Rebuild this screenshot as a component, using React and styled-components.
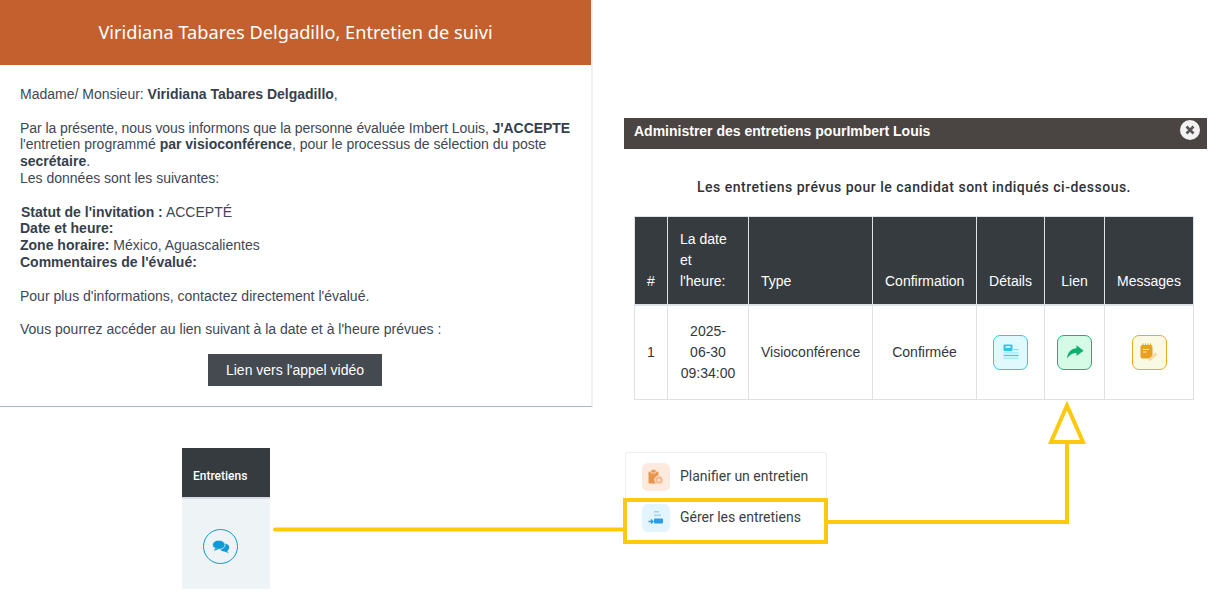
import React from 'react'
import styled, { createGlobalStyle } from 'styled-components'

const GlobalStyle = createGlobalStyle`
  html, body {
    margin: 0;
    padding: 0;
    background: #fff;
    font-family: "Liberation Sans", Arial, sans-serif;
  }
`

const Canvas = styled.div`
  position: relative;
  width: 1209px;
  height: 598px;
  overflow: hidden;
  background: #fff;
`

const TopRow = styled.div`
  display: flex;
  align-items: flex-start;
  height: 407px;
`

const BottomRow = styled.div`
  display: flex;
  align-items: flex-start;
  padding: 41px 0 0 182px;
`

/* email preview */
const Email = styled.section`
  box-sizing: border-box;
  width: 593px;
  height: 407px;
  flex: none;
  border-right: 2px solid #f0f0f0;
  border-bottom: 1px solid #a9bccd;
`

const EmailHeader = styled.h1`
  margin: 0;
  height: 65px;
  background: #c4602e;
  color: #fff;
  font-family: "Noto Sans", sans-serif;
  font-size: 18.2px;
  font-weight: 400;
  line-height: 65px;
  text-align: center;
`

const EmailBody = styled.div`
  padding: 21.1px 0 0 20px;
  color: #3d4757;
  font-size: 14px;
  line-height: 16.8px;
  white-space: nowrap;
  b {
    color: #363f4d;
  }
`

const Para = styled.p`
  margin: 0 0 16.8px;
`

const TightLine = styled.span`
  letter-spacing: -0.07px;
`

const Status = styled.b`
  margin-left: 1px;
`

const VideoLink = styled.a`
  display: block;
  width: 174px;
  height: 32px;
  margin: -1.1px 0 0 188px;
  background: #454950;
  color: #fff;
  font-size: 14px;
  line-height: 32px;
  text-align: center;
`

/* modal */
const Modal = styled.section`
  width: 583px;
  flex: none;
  margin: 118px 0 0 31px;
`

const ModalHeader = styled.header`
  display: flex;
  align-items: center;
  justify-content: space-between;
  height: 31px;
  padding: 0 7px 5px 10px;
  box-sizing: border-box;
  background: #4a4443;
  color: #fff;
  font-size: 14px;
  font-weight: 700;
`

const CloseBtn = styled.span`
  display: flex;
  align-items: center;
  justify-content: center;
  width: 20px;
  height: 20px;
  margin-bottom: 2px;
  border-radius: 50%;
  background: #f2f2f2;
`

const Intro = styled.p`
  margin: 31px 0 21px;
  padding-right: 3px;
  color: #2f3338;
  font-family: Roboto, sans-serif;
  font-size: 14px;
  font-weight: 500;
  line-height: 15px;
  text-align: center;
  letter-spacing: 0.5px;
`

const Table = styled.table`
  width: 559px;
  margin-left: 10px;
  border-collapse: collapse;
  table-layout: fixed;
  font-size: 14px;
  line-height: 21px;
  color: #32373c;
`

const Head = styled.th`
  padding: 12px;
  background: #363b40;
  color: #fff;
  font-weight: 400;
  text-align: ${(p) => p.$align || 'center'};
  vertical-align: bottom;
  border: 1px solid #dee2e6;
  border-bottom-width: 2px;
`

const Cell = styled.td`
  padding: 12px;
  height: 94px;
  box-sizing: border-box;
  text-align: ${(p) => p.$align || 'center'};
  vertical-align: middle;
  border: 1px solid #dee2e6;
`

const ActionBtn = styled.span`
  display: inline-flex;
  align-items: center;
  justify-content: center;
  box-sizing: border-box;
  width: 35px;
  height: 35px;
  vertical-align: middle;
  border-radius: 7px;
  border: 1px solid ${(p) => p.$border};
  background: ${(p) => p.$bg};
`

/* sidebar tab */
const Tab = styled.div`
  width: 88px;
  flex: none;
`

const TabHead = styled.div`
  height: 49px;
  padding-left: 11px;
  background: #363b40;
  color: #fff;
  font-family: Roboto, sans-serif;
  font-size: 12px;
  font-weight: 500;
  line-height: 57px;
  border-bottom: 2px solid #d5dde2;
`

const TabBody = styled.div`
  display: flex;
  align-items: center;
  padding-left: 21px;
  height: 90px;
  background: #eef3f6;
`

const Circle = styled.span`
  display: flex;
  align-items: center;
  justify-content: center;
  box-sizing: border-box;
  width: 35px;
  height: 35px;
  margin-top: 4px;
  border-radius: 50%;
  border: 1px solid #0d9ad6;
`

/* dropdown */
const Menu = styled.ul`
  list-style: none;
  box-sizing: border-box;
  width: 202px;
  height: 90px;
  margin: 4px 0 0 355px;
  padding: 10px 0 0 16px;
  border: 1px solid #eceff3;
  border-bottom: 0;
  border-radius: 3px;
`

const MenuItem = styled.li`
  display: flex;
  align-items: center;
  gap: 10px;
  height: 28px;
  margin-bottom: 13px;
  color: #3a3f45;
  font-family: Roboto, sans-serif;
  font-size: 14px;
`

const MenuLabel = styled.span`
  padding-bottom: 2px;
`

const MenuIcon = styled.span`
  display: flex;
  align-items: center;
  justify-content: center;
  width: 28px;
  height: 28px;
  border-radius: 6px;
  background: ${(p) => p.$bg};
`

const Overlay = styled.svg`
  position: absolute;
  top: 0;
  left: 0;
  pointer-events: none;
`

const DetailsIcon = () => (
  <svg width="16" height="16" viewBox="0 0 16 16">
    <rect x="0.5" y="0.5" width="9" height="6.5" rx="1" fill="#2bc6ea" />
    <rect x="2.5" y="2" width="5" height="2" fill="#c4f0fa" />
    <rect x="10.5" y="5" width="5" height="1.2" fill="#7fdcf0" />
    <rect x="0.5" y="8.2" width="15" height="1.2" fill="#a6e8f6" />
    <rect x="0.5" y="10.8" width="15" height="1.4" fill="#45cfea" />
    <rect x="0.5" y="13.6" width="15" height="1.2" fill="#a6e8f6" />
  </svg>
)

const ShareIcon = () => (
  <svg width="18" height="14" viewBox="0 0 18 14">
    <path d="M10.5 0.2 L17.6 5.8 L10.5 11 V8 C6.6 8 4 9.4 1 13.6 C1.4 8 4.6 3.6 10.5 3.2 Z" fill="#0fb06e" />
  </svg>
)

const NotesIcon = () => (
  <svg width="18" height="18" viewBox="0 0 18 18">
    <rect x="0.5" y="2" width="12" height="13.5" rx="2" fill="#e9a023" />
    <path d="M3 0.5v3M5.5 0.5v3M8 0.5v3M10.5 0.5v3" stroke="#e9a023" strokeWidth="1" />
    <path d="M3 6.5h6M3 9h3.5" stroke="#fbeecb" strokeWidth="1.1" />
    <path d="M8.5 16 L15.5 9.5 L17.5 11.5 L10.5 17.8 H8.5 Z" fill="#f6d9a4" />
  </svg>
)

const PlanIcon = () => (
  <svg width="16" height="16" viewBox="0 0 16 16">
    <rect x="0.5" y="2.5" width="10" height="12" rx="1.2" fill="#e8954f" />
    <rect x="3" y="0.6" width="5" height="3.4" rx="1" fill="#e8954f" stroke="#fde9dc" strokeWidth="0.8" />
    <circle cx="11" cy="11" r="4.2" fill="#f5b98d" stroke="#fde9dc" strokeWidth="1" />
    <circle cx="11" cy="11" r="1.5" fill="#fde9dc" />
  </svg>
)

const ManageIcon = () => (
  <svg width="16" height="16" viewBox="0 0 16 16">
    <path d="M6 1h5v1.4H6zM6 4.5h7v1.4H6z" fill="#9dd4f5" />
    <rect x="6" y="8.4" width="9" height="5.2" rx="1" fill="#2b9de6" />
    <path d="M0.5 11.5h4M3 9.5l2 2-2 2" stroke="#2b9de6" strokeWidth="1.3" fill="none" />
  </svg>
)

const ChatIcon = () => (
  <svg width="18" height="13" viewBox="0 0 18 13">
    <ellipse cx="12.5" cy="7.5" rx="4.8" ry="4" fill="#0d9ad6" />
    <path d="M14.5 10.5l2.5 2.4-4.5-1.2z" fill="#0d9ad6" />
    <ellipse cx="6.8" cy="4.8" rx="6.3" ry="4.6" fill="#0d9ad6" stroke="#eef3f6" strokeWidth="0.8" />
    <path d="M3.5 8.2l-1.8 2.6 4.4-1.4z" fill="#0d9ad6" />
  </svg>
)

const App = () => (
  <Canvas>
    <GlobalStyle />
    <TopRow>
      <Email>
        <EmailHeader>Viridiana Tabares Delgadillo, Entretien de suivi</EmailHeader>
        <EmailBody>
          <Para>
            Madame/ Monsieur: <b>Viridiana Tabares Delgadillo</b>,
          </Para>
          <Para>
            <TightLine>
              Par la présente, nous vous informons que la personne évaluée Imbert Louis, <b>J'ACCEPTE</b>
            </TightLine>
            <br />
            l'entretien programmé <b>par visioconférence</b>, pour le processus de sélection du poste
            <br />
            <b>secrétaire</b>.
            <br />
            Les données sont les suivantes:
          </Para>
          <Para>
            <Status>Statut de l'invitation :</Status> ACCEPTÉ
            <br />
            <b>Date et heure:</b>
            <br />
            <b>Zone horaire:</b> México, Aguascalientes
            <br />
            <b>Commentaires de l'évalué:</b>
          </Para>
          <Para>Pour plus d'informations, contactez directement l'évalué.</Para>
          <Para>Vous pourrez accéder au lien suivant à la date et à l'heure prévues :</Para>
          <VideoLink>Lien vers l'appel vidéo</VideoLink>
        </EmailBody>
      </Email>
      <Modal>
        <ModalHeader>
          <span>Administrer des entretiens pourImbert Louis</span>
          <CloseBtn>
            <svg width="10" height="10" viewBox="0 0 10 10">
              <path d="M1.5 1.5l7 7M8.5 1.5l-7 7" stroke="#5a5554" strokeWidth="2.6" />
            </svg>
          </CloseBtn>
        </ModalHeader>
        <Intro>Les entretiens prévus pour le candidat sont indiqués ci-dessous.</Intro>
        <Table>
          <colgroup>
            <col width="33" />
            <col width="81" />
            <col width="124" />
            <col width="104" />
            <col width="68" />
            <col width="60" />
            <col width="89" />
          </colgroup>
          <thead>
            <tr>
              <Head>#</Head>
              <Head $align="left">La date et l'heure:</Head>
              <Head $align="left">Type</Head>
              <Head>Confirmation</Head>
              <Head>Détails</Head>
              <Head>Lien</Head>
              <Head>Messages</Head>
            </tr>
          </thead>
          <tbody>
            <tr>
              <Cell>1</Cell>
              <Cell>2025-06-30 09:34:00</Cell>
              <Cell $align="left">Visioconférence</Cell>
              <Cell>Confirmée</Cell>
              <Cell>
                <ActionBtn $border="#22cfe6" $bg="#e0f9fd"><DetailsIcon /></ActionBtn>
              </Cell>
              <Cell>
                <ActionBtn $border="#10b67a" $bg="#d5fbe6"><ShareIcon /></ActionBtn>
              </Cell>
              <Cell>
                <ActionBtn $border="#eeaa22" $bg="#f9f9e4"><NotesIcon /></ActionBtn>
              </Cell>
            </tr>
          </tbody>
        </Table>
      </Modal>
    </TopRow>
    <BottomRow>
      <Tab>
        <TabHead>Entretiens</TabHead>
        <TabBody>
          <Circle><ChatIcon /></Circle>
        </TabBody>
      </Tab>
      <Menu>
        <MenuItem>
          <MenuIcon $bg="#fdeadf"><PlanIcon /></MenuIcon>
          <MenuLabel>Planifier un entretien</MenuLabel>
        </MenuItem>
        <MenuItem>
          <MenuIcon $bg="#e2f4fd"><ManageIcon /></MenuIcon>
          <MenuLabel>Gérer les entretiens</MenuLabel>
        </MenuItem>
      </Menu>
    </BottomRow>
    <Overlay width="1209" height="598" viewBox="0 0 1209 598" fill="none" stroke="#fdc90f" strokeWidth="4">
      <path d="M275 529.5H625" strokeLinecap="round" />
      <rect x="625" y="500" width="201" height="42" />
      <path d="M826 522H1067V443" />
      <path d="M1067 405.5L1051 442H1083Z" />
    </Overlay>
  </Canvas>
)

export default App
